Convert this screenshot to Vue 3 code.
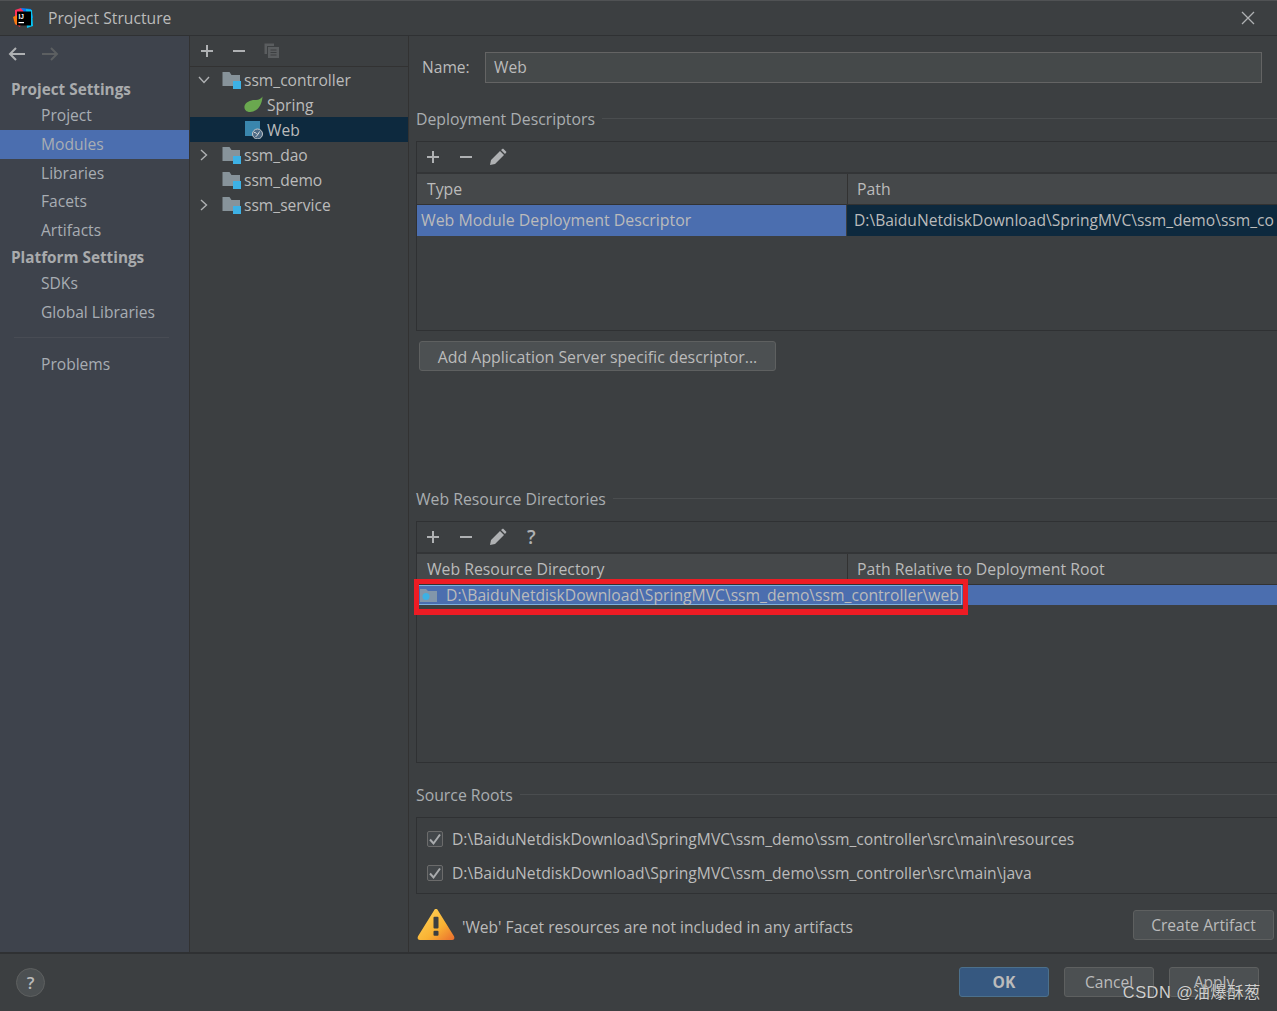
<script setup>
const psItems = ['Project', 'Modules', 'Libraries', 'Facets', 'Artifacts']
const plItems = ['SDKs', 'Global Libraries']
const tree = [
  { name: 'ssm_controller', icon: 'folder', arrow: 'down' },
  { name: 'Spring', icon: 'spring', child: true },
  { name: 'Web', icon: 'web', child: true, selected: true },
  { name: 'ssm_dao', icon: 'folder', arrow: 'right' },
  { name: 'ssm_demo', icon: 'folder' },
  { name: 'ssm_service', icon: 'folder', arrow: 'right' }
]
const roots = [
  'D:\\BaiduNetdiskDownload\\SpringMVC\\ssm_demo\\ssm_controller\\src\\main\\resources',
  'D:\\BaiduNetdiskDownload\\SpringMVC\\ssm_demo\\ssm_controller\\src\\main\\java'
]
</script>

<template>
  <div class="dialog">
    <header class="titlebar">
      <svg class="logo" width="22" height="22" viewBox="0 0 22 22">
        <path d="M3 3 L9 1 L13 4 L8 20 L3 17 Z" fill="#fe315d" />
        <path d="M1 10 L5 8 L8 19 L3 17 Z" fill="#f97a12" />
        <path d="M9 1 L19 2 L21 11 L14 8 Z" fill="#087cfa" />
        <path d="M14 2 L20 3 L21 19 L15 21 Z" fill="#07c3f2" />
        <rect x="5" y="4.500" width="14" height="14" fill="#000" />
        <text x="6.500" y="11.500" class="logo-text">IJ</text>
        <rect x="6.500" y="15" width="5.500" height="1.200" fill="#fff" />
      </svg>
      <span class="title">Project Structure</span>
      <svg class="close" width="14" height="14" viewBox="0 0 14 14">
        <path d="M1 1 L13 13 M13 1 L1 13" stroke="#afb1b3" stroke-width="1.300" fill="none" />
      </svg>
    </header>

    <main class="body">
      <aside class="sidebar">
        <div class="nav-arrows">
          <svg width="18" height="14" viewBox="0 0 18 14">
            <path d="M17 7 H2 M8 1 L2 7 L8 13" stroke="#afb1b3" stroke-width="2" fill="none" />
          </svg>
          <svg width="18" height="14" viewBox="0 0 18 14">
            <path d="M1 7 H16 M10 1 L16 7 L10 13" stroke="#5c5f61" stroke-width="2" fill="none" />
          </svg>
        </div>
        <div class="group">Project Settings</div>
        <div v-for="i in psItems" :key="i" class="item" :class="{ active: i === 'Modules' }">{{ i }}</div>
        <div class="group group-second">Platform Settings</div>
        <div v-for="i in plItems" :key="i" class="item">{{ i }}</div>
        <div class="side-divider"></div>
        <div class="item">Problems</div>
      </aside>

      <section class="tree">
        <div class="tree-toolbar">
          <svg width="14" height="14" viewBox="0 0 14 14"><path d="M7 1 V13 M1 7 H13" stroke="#afb1b3" stroke-width="2" /></svg>
          <svg width="14" height="14" viewBox="0 0 14 14"><path d="M1 7 H13" stroke="#afb1b3" stroke-width="2" /></svg>
          <svg class="copy-icon" width="17" height="17" viewBox="0 0 17 17">
            <path d="M1.500 1.500 H11 V4 H4 V12 H1.500 Z" fill="#5a5d5f" />
            <rect x="5" y="5" width="11" height="11" fill="#5a5d5f" />
            <path d="M7.500 8 H13.500 M7.500 10.500 H13.500 M7.500 13 H13.500" stroke="#3c3f41" stroke-width="1" />
          </svg>
        </div>
        <div v-for="n in tree" :key="n.name" class="tree-row" :class="{ selected: n.selected, child: n.child }">
          <span class="arrow">
            <svg v-if="n.arrow === 'down'" width="12" height="8" viewBox="0 0 12 8"><path d="M1 1 L6 6.500 L11 1" stroke="#afb1b3" stroke-width="1.400" fill="none" /></svg>
            <svg v-if="n.arrow === 'right'" width="8" height="12" viewBox="0 0 8 12"><path d="M1 1 L6.500 6 L1 11" stroke="#afb1b3" stroke-width="1.400" fill="none" /></svg>
          </span>
          <svg v-if="n.icon === 'folder'" class="t-icon folder" width="19" height="19" viewBox="0 0 19 19">
            <path d="M0.500 2 H7.500 L9.500 5 H18 V16 H0.500 Z" fill="#87939a" />
            <rect x="11" y="11" width="8" height="8" fill="#3db1e5" />
          </svg>
          <svg v-if="n.icon === 'spring'" class="t-icon" width="19" height="17" viewBox="0 0 19 17">
            <path d="M18.500 0.500 C18 10 12.500 16 6 16 C2 16 0 13.500 0.500 10 C1.500 6 7 3.500 12 4 C15 4 17 2.500 18.500 0.500 Z" fill="#6aa84f" />
          </svg>
          <svg v-if="n.icon === 'web'" class="t-icon" width="19" height="19" viewBox="0 0 19 19">
            <rect x="1" y="1" width="15" height="15" fill="#3a86ad" />
            <circle cx="13.500" cy="14" r="5" fill="#4d6a85" stroke="#c4c8cc" stroke-width="1" />
            <path d="M10 12.500 C12 11.500 12 14.500 14 14.500 L15.500 11.500 M11.500 17 L13.500 15" stroke="#d5d8da" stroke-width="1" fill="none" />
          </svg>
          <span>{{ n.name }}</span>
        </div>
      </section>

      <section class="detail">
        <div class="name-row">
          <label>Name:</label>
          <div class="name-input">Web</div>
        </div>

        <div class="section-title first"><span>Deployment Descriptors</span><i></i></div>
        <div class="box box-deploy">
          <div class="tbl-toolbar">
            <svg width="14" height="14" viewBox="0 0 14 14"><path d="M7 1 V13 M1 7 H13" stroke="#afb1b3" stroke-width="2" /></svg>
            <svg width="14" height="14" viewBox="0 0 14 14"><path d="M1 7 H13" stroke="#afb1b3" stroke-width="2" /></svg>
            <svg class="pencil" width="18" height="18" viewBox="0 0 18 18"><path d="M1 17 L2 12 L11 3 L15 7 L6 16 Z M12 2 L14 0.500 L17.500 4 L16 6 Z" fill="#afb1b3" /></svg>
          </div>
          <div class="tbl-head">
            <div class="col-a">Type</div>
            <div class="col-b">Path</div>
          </div>
          <div class="tbl-row row-tall">
            <div class="cell-a">Web Module Deployment Descriptor</div>
            <div class="cell-b">D:\BaiduNetdiskDownload\SpringMVC\ssm_demo\ssm_co</div>
          </div>
        </div>

        <button class="btn btn-server">Add Application Server specific descriptor...</button>

        <div class="section-title second"><span>Web Resource Directories</span><i></i></div>
        <div class="box box-web">
          <div class="tbl-toolbar">
            <svg width="14" height="14" viewBox="0 0 14 14"><path d="M7 1 V13 M1 7 H13" stroke="#afb1b3" stroke-width="2" /></svg>
            <svg width="14" height="14" viewBox="0 0 14 14"><path d="M1 7 H13" stroke="#afb1b3" stroke-width="2" /></svg>
            <svg class="pencil" width="18" height="18" viewBox="0 0 18 18"><path d="M1 17 L2 12 L11 3 L15 7 L6 16 Z M12 2 L14 0.500 L17.500 4 L16 6 Z" fill="#afb1b3" /></svg>
            <span class="help-glyph">?</span>
          </div>
          <div class="tbl-head">
            <div class="col-a">Web Resource Directory</div>
            <div class="col-b">Path Relative to Deployment Root</div>
          </div>
          <div class="tbl-row row-web">
            <div class="web-cell">
              <svg width="19" height="15" viewBox="0 0 19 15">
                <path d="M1 1 H7 L9 3 H18 V14 H1 Z" fill="#8296aa" />
                <circle cx="7" cy="8.500" r="3.500" fill="#3db1e5" />
              </svg>
              <span>D:\BaiduNetdiskDownload\SpringMVC\ssm_demo\ssm_controller\web</span>
            </div>
            <div class="red-mark"></div>
          </div>
        </div>

        <div class="section-title third"><span>Source Roots</span><i></i></div>
        <div class="box box-roots">
          <div v-for="r in roots" :key="r" class="root-row">
            <span class="check">
              <svg width="14" height="14" viewBox="0 0 14 14"><path d="M2 7.500 L5.500 11.500 L12 2.500" stroke="#a9abad" stroke-width="2" fill="none" /></svg>
            </span>
            <span>{{ r }}</span>
          </div>
        </div>

        <div class="warn-row">
          <svg class="warn-icon" width="38" height="33" viewBox="0 0 38 34" preserveAspectRatio="none">
            <defs>
              <linearGradient id="warnGrad" x1="0" y1="0" x2="1" y2="1">
                <stop offset="0" stop-color="#ffd75e" />
                <stop offset="0.600" stop-color="#f9b233" />
                <stop offset="1" stop-color="#ea6c2e" />
              </linearGradient>
            </defs>
            <path d="M19 1 C20 1 20.500 1.500 21 2.500 L37 29 C38 31 37 33 35 33 H3 C1 33 0 31 1 29 L17 2.500 C17.500 1.500 18 1 19 1 Z" fill="url(#warnGrad)" />
            <rect x="16.500" y="9" width="5" height="12" rx="1" fill="#3c3f41" />
            <rect x="16.500" y="23.500" width="5" height="5" rx="1" fill="#3c3f41" />
          </svg>
          <span class="warn-text">'Web' Facet resources are not included in any artifacts</span>
          <button class="btn btn-artifact">Create Artifact</button>
        </div>
      </section>
    </main>

    <footer class="footer">
      <div class="help-circle">?</div>
      <div class="footer-actions">
        <button class="btn btn-foot btn-ok">OK</button>
        <button class="btn btn-foot">Cancel</button>
        <button class="btn btn-foot">Apply</button>
      </div>
      <div class="watermark">CSDN @油爆酥葱</div>
    </footer>
  </div>
</template>

<style>
html, body { margin: 0; background: #3c3f41; }
</style>

<style scoped>
.dialog {
  position: relative;
  width: 1277px;
  height: 1011px;
  background: #3c3f41;
  color: #bbbbbb;
  font-family: "Open Sans", "Noto Sans", sans-serif;
  font-size: 15.600px;
  overflow: hidden;
  display: flex;
  flex-direction: column;
  box-sizing: border-box;
  border-top: 1px solid #505254;
}
.titlebar {
  height: 35px;
  flex: none;
  display: flex;
  align-items: center;
  border-bottom: 1px solid #2f3133;
  box-sizing: border-box;
  padding-left: 12px;
  padding-right: 22px;
}
.logo-text { font: bold 6.500px "Liberation Sans", sans-serif; fill: #fff; }
.title { margin-left: 14px; font-size: 15.700px; }
.close { margin-left: auto; }
.body { flex: 1; display: flex; min-height: 0; }
.sidebar {
  width: 189px;
  flex: none;
  background: #3e434c;
  border-right: 1px solid #323232;
  box-sizing: content-box;
}
.nav-arrows {
  height: 36px;
  padding-bottom: 4px;
  display: flex;
  align-items: center;
  gap: 15px;
  padding-left: 8px;
}
.group { height: 25px; line-height: 26px; padding-left: 11px; font-weight: 700; font-size: 15.300px; color: #a9abad; }
.group-second { margin-top: -1px; }
.item { height: 28.800px; line-height: 28.800px; padding-left: 41px; color: #a8adb3; }
.item.active { background: #4b6eaf; }
.side-divider { height: 1px; background: #484c54; margin: 10px 20px 12px 14px; }
.tree { width: 219px; flex: none; border-right: 1px solid #323232; box-sizing: border-box; }
.tree-toolbar {
  height: 30px;
  border-bottom: 1px solid #323232;
  display: flex;
  align-items: center;
  gap: 18px;
  padding-left: 10px;
  box-sizing: content-box;
}
.copy-icon { margin-top: -2px; margin-left: -1px; }
.tree-row { height: 25px; display: flex; align-items: center; gap: 4px; position: relative; }
.tree-row.selected { background: #0d293e; }
.arrow { width: 28px; flex: none; display: flex; justify-content: center; }
.t-icon { flex: none; }
.t-icon.folder { margin-right: -1px; }
.tree-row.child .t-icon { margin-left: 22px; }
.detail { flex: 1; min-width: 0; padding-left: 7px; box-sizing: border-box; }
.name-row { height: 62px; display: flex; align-items: center; box-sizing: border-box; }
.name-row label { margin-left: 6px; width: 63px; }
.name-input {
  width: 777px;
  height: 31px;
  line-height: 29px;
  background: #45494a;
  border: 1px solid #646464;
  box-sizing: border-box;
  padding-left: 8px;
}
.section-title { display: flex; align-items: center; gap: 7px; height: 22px; color: #a9adb0; font-size: 15.800px; }
.section-title span { padding-top: 2px; }
.section-title i { flex: 1; height: 1px; background: #4a4d4f; }
.section-title.first { margin-top: 9px; }
.section-title.second { margin-top: 116px; }
.section-title.third { margin-top: 20px; }
.box { border: 1px solid #2f3133; border-right: 0; margin-top: 12px; box-sizing: border-box; }
.box-deploy { height: 190px; }
.box-web { height: 242px; }
.box-roots { height: 77px; padding-top: 4px; font-size: 15.650px; }
.tbl-toolbar {
  height: 30px;
  display: flex;
  align-items: center;
  gap: 19px;
  padding-left: 9px;
  border-bottom: 2px solid #333537;
  box-sizing: content-box;
}
.pencil { margin-left: -3px; }
.help-glyph { font-size: 19px; font-weight: 600; color: #afb1b3; margin-left: 1px; }
.tbl-head { display: flex; height: 30px; line-height: 30px; font-size: 15.800px; background: #45484a; border-bottom: 1px solid #323232; box-sizing: content-box; }
.col-a { width: 431px; padding-left: 10px; box-sizing: border-box; border-right: 1px solid #323232; }
.col-b { padding-left: 9px; }
.tbl-row { display: flex; }
.row-tall { height: 31px; line-height: 31px; }
.cell-a { width: 429px; flex: none; background: #4b6eaf; padding-left: 4px; box-sizing: border-box; font-size: 15.900px; }
.cell-b { flex: 1; min-width: 0; margin-left: 1px; background: #0d293e; padding-left: 7px; white-space: nowrap; overflow: hidden; }
.row-web { position: relative; height: 20px; line-height: 20px; background: #4b6eaf; }
.web-cell {
  width: 543px;
  margin-left: 2px;
  height: 20px;
  display: flex;
  align-items: center;
  gap: 8px;
  border: 1px solid #7db1e0;
  border-left-width: 0;
  box-sizing: border-box;
  white-space: nowrap;
  font-size: 15.700px;
}
.red-mark {
  position: absolute;
  left: -3px;
  top: -6px;
  width: 554px;
  height: 36px;
  border: 5px solid #ed1c24;
  border-bottom-width: 6px;
  box-sizing: border-box;
  pointer-events: none;
}
.root-row { height: 34px; display: flex; align-items: center; gap: 9px; padding-left: 10px; white-space: nowrap; }
.check {
  width: 16px;
  height: 16px;
  border: 1px solid #6b6b6b;
  background: #43474a;
  border-radius: 2px;
  display: flex;
  align-items: center;
  justify-content: center;
  box-sizing: border-box;
}
.warn-row { display: flex; align-items: center; height: 60px; padding-left: 1px; }
.warn-icon { margin-top: 1px; flex: none; }
.warn-text { margin-left: 7px; margin-top: 6px; }
.btn {
  font: inherit;
  color: #bbbbbb;
  background: #4c5052;
  border: 1px solid #5e6060;
  border-radius: 3px;
  box-sizing: border-box;
  padding: 1px 0 0;
}
.btn-server { display: block; width: 357px; height: 30px; margin: 10px 0 0 3px; font-size: 15.900px; }
.btn-artifact { width: 141px; height: 30px; margin-left: auto; margin-right: 3px; margin-top: 1px; }
.footer {
  height: 59px;
  flex: none;
  border-top: 2px solid #2f3133;
  box-sizing: border-box;
  display: flex;
  align-items: center;
  padding: 0 18px 0 16px;
  position: relative;
}
.help-circle {
  width: 29px;
  height: 29px;
  border-radius: 50%;
  background: #4c5052;
  border: 1px solid #5e6060;
  box-sizing: border-box;
  text-align: center;
  line-height: 27px;
  font-weight: 600;
  font-size: 17px;
}
.footer-actions { margin-left: auto; margin-top: -2px; display: flex; gap: 15px; }
.btn-foot { width: 90px; height: 30px; }
.btn-ok { background: #365880; border-color: #4c708c; font-weight: 700; }
.watermark {
  position: absolute;
  right: 16px;
  top: 25px;
  font-family: "Liberation Sans", "Noto Sans CJK SC", sans-serif;
  font-size: 16.400px;
  color: #cfcfcf;
  letter-spacing: 0.500px;
  text-shadow: 0 0 1px #333;
}
</style>
